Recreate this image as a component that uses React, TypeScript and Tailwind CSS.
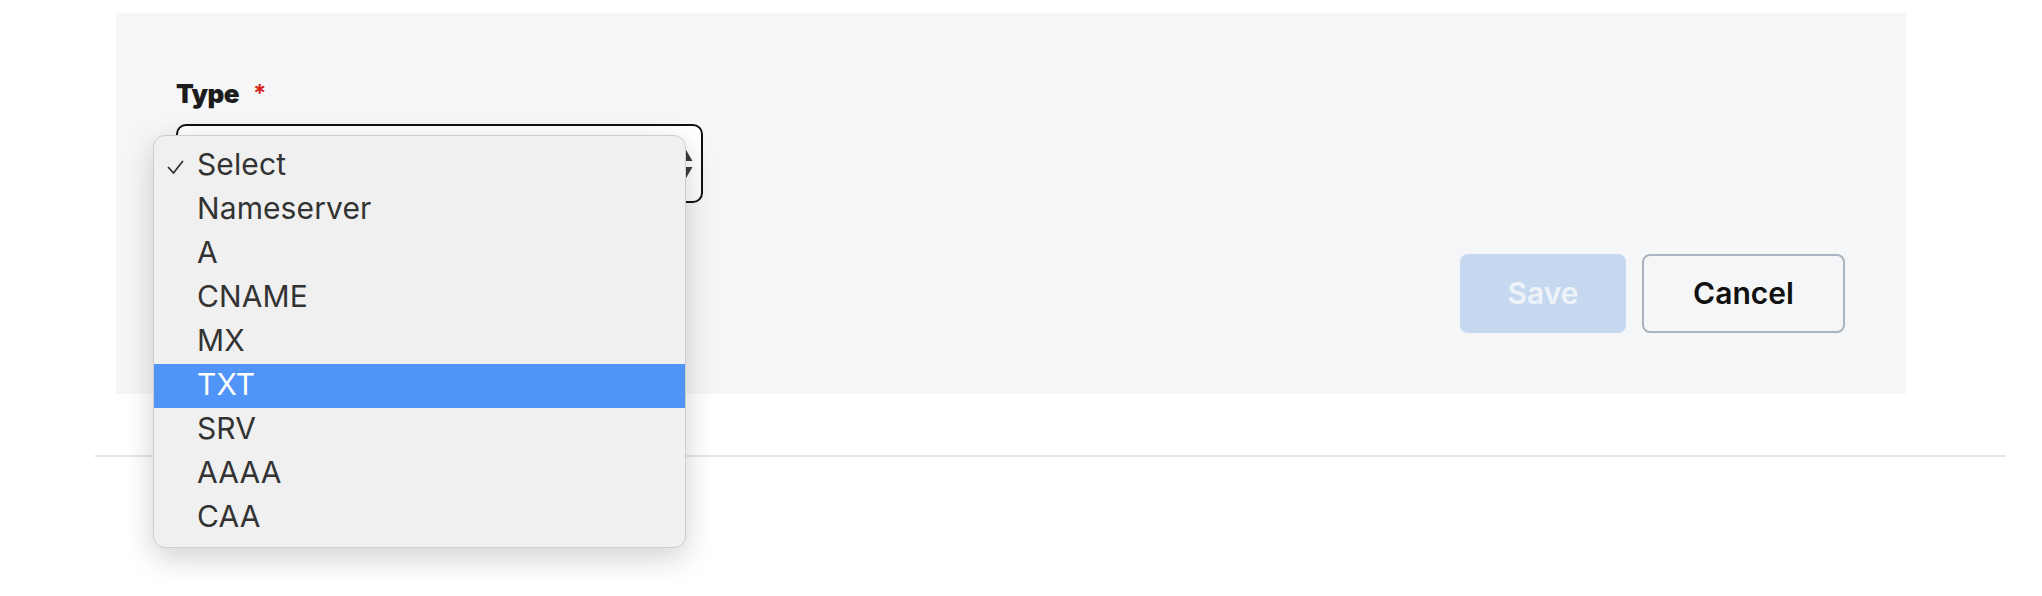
import React from "react";

const options = ["Select", "Nameserver", "A", "CNAME", "MX", "TXT", "SRV", "AAAA", "CAA"];

const App = () => {
  const selected = "Select";
  const highlighted = "TXT";

  return (
    <div className="relative w-[2042px] h-[596px] bg-white pt-[13px] font-['Inter',sans-serif] overflow-hidden">
      {/* form panel */}
      <div className="ml-[116px] w-[1790px] h-[381px] bg-[#f5f6f8] pl-[60px] pr-[61px] pt-[66px] flex flex-col">
        <label className="flex items-center h-[30px] text-[26px] leading-[30px] font-black text-[#1c1c1c] tracking-[-0.6px]">
          Type
          <span className="ml-[14px] text-[#d3261c] text-[24px] font-bold">*</span>
        </label>
        <div className="mt-[15px] w-[527px] h-[79px] rounded-[10px] border-2 border-[#111] bg-white flex items-center justify-end pr-[8px]">
          <svg width="15" height="34" viewBox="0 0 15 34" className="text-[#3c3c3c]">
            <path d="M7.5 2 L14.5 14 L0.5 14 Z" fill="currentColor" />
            <path d="M7.5 32 L14.5 20 L0.5 20 Z" fill="currentColor" />
          </svg>
        </div>
        <div className="mt-[51px] flex justify-end gap-[16px]">
          <button className="w-[166px] h-[79px] rounded-[8px] bg-[#c5d8ef] text-[#eef3fa] text-[30px] font-semibold">
            Save
          </button>
          <button className="w-[203px] h-[79px] rounded-[8px] border-2 border-[#a9b4c1] text-[#111] text-[30px] font-semibold">
            Cancel
          </button>
        </div>
      </div>

      <div className="mt-[61px] ml-[95px] w-[1911px] h-[2px] bg-[#e6e6e8]" />

      {/* native select popup */}
      <div className="absolute left-[153px] top-[135px] w-[533px] h-[413px] rounded-[12px] bg-[#f0f0f0] border border-[#cdcdcd] shadow-[0_10px_30px_rgba(0,0,0,0.18)] pt-[8px] pb-[8px] overflow-hidden">
        {options.map((opt) => (
          <div
            key={opt}
            className={`relative h-[44px] flex items-center pl-[43px] pb-[4px] text-[30px] tracking-[0.1px] ${
              opt === highlighted ? "bg-[#5094f7] text-white" : "text-[#333]"
            }`}
          >
            {opt === selected && (
              <svg
                width="17"
                height="15"
                viewBox="0 0 17 15"
                className="absolute left-[13px] top-[16px]"
              >
                <path d="M1.5 7.5 L6.5 13 L15.5 1.5" fill="none" stroke="#333" strokeWidth="1.8" strokeLinecap="round" strokeLinejoin="round" />
              </svg>
            )}
            {opt}
          </div>
        ))}
      </div>
    </div>
  );
};

export default App;
